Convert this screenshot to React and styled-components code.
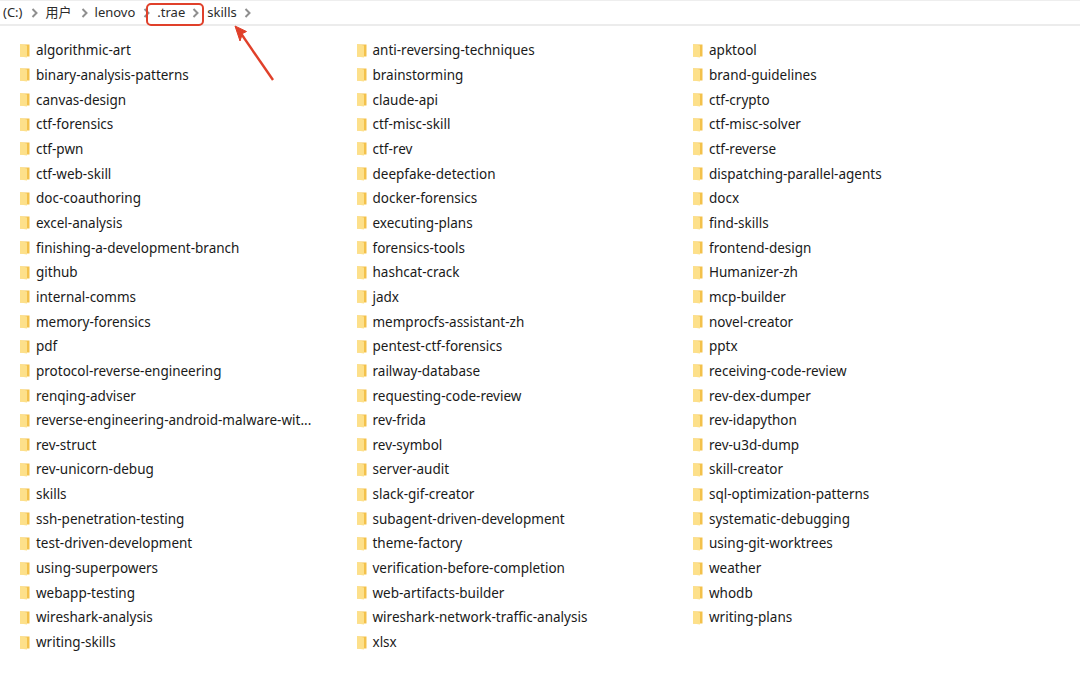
import React from "react";
import styled, { createGlobalStyle } from "styled-components";

const GlobalStyle = createGlobalStyle`
  html, body {
    margin: 0;
    padding: 0;
    background: #fff;
  }
  body {
    width: 1080px;
    height: 673px;
    overflow: hidden;
    font-family: "Noto Sans", "Noto Sans CJK SC", sans-serif;
    color: #1a1a1a;
  }
`;

const Window = styled.div`
  position: relative;
  width: 1080px;
  height: 673px;
`;

const AddressBar = styled.div`
  display: flex;
  align-items: center;
  height: 26px;
  padding-left: 3px;
  box-sizing: border-box;
  border-top: 1px solid #eee;
  border-bottom: 2px solid #ececec;
  font-size: 13px;
  color: #2b2b2b;
`;

const Crumb = styled.span`
  line-height: 23px;
  white-space: nowrap;
`;

const Chevron = styled.svg`
  width: 7px;
  height: 10px;
  flex: none;
  margin: 1px ${(p) => p.$right}px 0 ${(p) => p.$left}px;
`;

const Highlight = styled.div`
  position: absolute;
  left: 146px;
  top: 3px;
  width: 58px;
  height: 23px;
  box-sizing: border-box;
  border: 2.5px solid #e0402a;
  border-radius: 5px;
`;

const Arrow = styled.svg`
  position: absolute;
  left: 228px;
  top: 20px;
  width: 50px;
  height: 65px;
`;

const FileGrid = styled.div`
  display: grid;
  grid-template-columns: repeat(3, 336.5px);
  grid-template-rows: repeat(25, 24.67px);
  grid-auto-flow: column;
  padding: 12px 0 0 19px;
`;

const Row = styled.div`
  display: flex;
  align-items: center;
  min-width: 0;
`;

const FolderIcon = styled.svg`
  width: 12px;
  height: 15px;
  flex: none;
  margin-right: 5px;
`;

const Name = styled.span`
  white-space: nowrap;
  font-size: 13.5px;
  line-height: 24px;
`;

const folders = [
  "algorithmic-art", "binary-analysis-patterns", "canvas-design", "ctf-forensics", "ctf-pwn",
  "ctf-web-skill", "doc-coauthoring", "excel-analysis", "finishing-a-development-branch", "github",
  "internal-comms", "memory-forensics", "pdf", "protocol-reverse-engineering", "renqing-adviser",
  "reverse-engineering-android-malware-wit...", "rev-struct", "rev-unicorn-debug", "skills",
  "ssh-penetration-testing", "test-driven-development", "using-superpowers", "webapp-testing",
  "wireshark-analysis", "writing-skills",
  "anti-reversing-techniques", "brainstorming", "claude-api", "ctf-misc-skill", "ctf-rev",
  "deepfake-detection", "docker-forensics", "executing-plans", "forensics-tools", "hashcat-crack",
  "jadx", "memprocfs-assistant-zh", "pentest-ctf-forensics", "railway-database",
  "requesting-code-review", "rev-frida", "rev-symbol", "server-audit", "slack-gif-creator",
  "subagent-driven-development", "theme-factory", "verification-before-completion",
  "web-artifacts-builder", "wireshark-network-traffic-analysis", "xlsx",
  "apktool", "brand-guidelines", "ctf-crypto", "ctf-misc-solver", "ctf-reverse",
  "dispatching-parallel-agents", "docx", "find-skills", "frontend-design", "Humanizer-zh",
  "mcp-builder", "novel-creator", "pptx", "receiving-code-review", "rev-dex-dumper",
  "rev-idapython", "rev-u3d-dump", "skill-creator", "sql-optimization-patterns",
  "systematic-debugging", "using-git-worktrees", "weather", "whodb", "writing-plans",
];

const crumbs = [
  { label: "(C:)", left: 8, right: 8 },
  { label: "用户", left: 9, right: 7 },
  { label: "lenovo", left: 8, right: 7 },
  { label: ".trae", left: 7, right: 8 },
  { label: "skills", left: 7, right: 0 },
];

const Folder = () => (
  <FolderIcon viewBox="0 0 12 15">
    <path d="M1 1.5 H10.5 V13.5 H1 Z" fill="#f3c14b" />
    <path d="M1 1 L8 2.5 V14.5 L1 13.5 Z" fill="#fde08a" />
  </FolderIcon>
);

const App = () => (
  <Window>
    <GlobalStyle />
    <AddressBar>
      {crumbs.map((c) => (
        <React.Fragment key={c.label}>
          <Crumb>{c.label}</Crumb>
          <Chevron $left={c.left} $right={c.right} viewBox="0 0 7 10">
            <path d="M1.5 1 L5.5 5 L1.5 9" fill="none" stroke="#8f8f8f" strokeWidth="2" />
          </Chevron>
        </React.Fragment>
      ))}
    </AddressBar>
    <Highlight />
    <Arrow viewBox="0 0 50 65">
      <path d="M45 60 L12 12" stroke="#e0402a" strokeWidth="2.4" fill="none" />
      <path d="M7 6 L18.5 11.5 L14.5 13.5 L12 21 Z" fill="#e0402a" stroke="#e0402a" strokeWidth="1" />
    </Arrow>
    <FileGrid>
      {folders.map((name) => (
        <Row key={name}>
          <Folder />
          <Name>{name}</Name>
        </Row>
      ))}
    </FileGrid>
  </Window>
);

export default App;
